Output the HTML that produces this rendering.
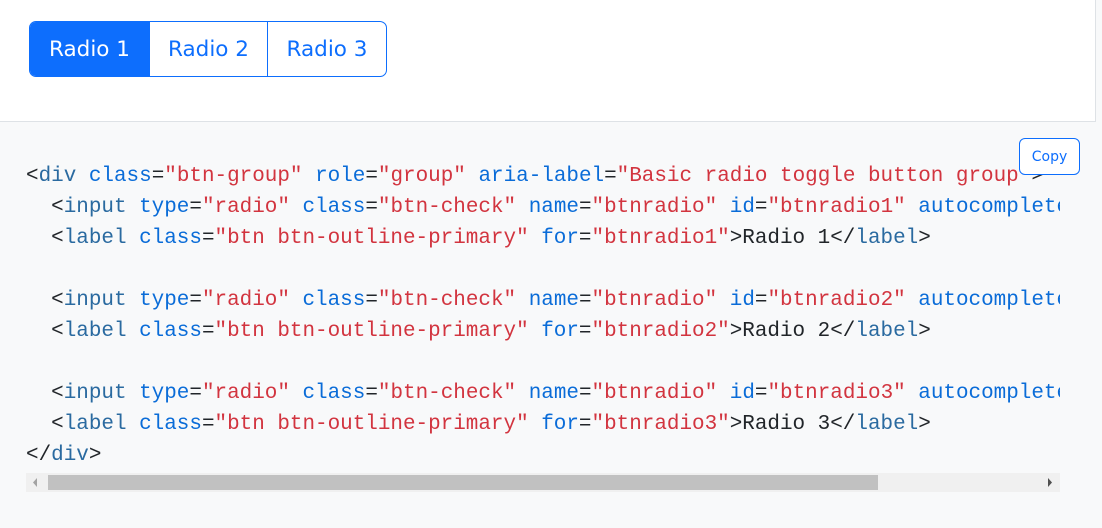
<!DOCTYPE html>
<html><head><meta charset="utf-8"><style>
body{margin:0;width:1102px;height:528px;background:#f8f9fa;font-family:"DejaVu Sans","Liberation Sans",sans-serif;position:relative;overflow:hidden}
.top{position:absolute;left:0;top:0;width:1095px;height:121px;background:#fff;border-right:1px solid #dee2e6;border-bottom:1px solid #dee2e6}
.grp{position:absolute;left:29px;top:21px;display:flex;height:56px;border:1px solid #0d6efd;border-radius:7px;overflow:hidden;box-sizing:border-box}
.grp div{display:flex;align-items:center;justify-content:center;font-size:21.5px;color:#0d6efd;box-sizing:border-box}
.grp .a{background:#0d6efd;color:#fff;width:119px}
.grp .b{width:118px;border-left:1px solid #0d6efd}
.grp .c{width:119px;border-left:1px solid #0d6efd}
.code{position:absolute;left:26px;top:161px;width:1034px;overflow:hidden;white-space:pre;font-family:"Liberation Mono",monospace;font-size:20.95px;line-height:31px;color:#212529}
.t{color:#2a6aa0}.n{color:#0a6cd8}.s{color:#d2343f}
.copy{position:absolute;left:1019px;top:138px;width:61px;height:37px;box-sizing:border-box;border:1px solid #0d6efd;border-radius:6px;background:#fff;color:#0d6efd;font-size:14px;display:flex;align-items:center;justify-content:center}
.sb{position:absolute;left:26px;top:473px;width:1034px;height:19px;background:#f0f0f0}
.th{position:absolute;left:22px;top:2px;width:830px;height:15px;background:#c1c1c1}
</style></head><body>
<div class="top"><div class="grp"><div class="a">Radio 1</div><div class="b">Radio 2</div><div class="c">Radio 3</div></div></div>
<div class="code">&lt;<span class="t">div</span> <span class="n">class</span>=<span class="s">"btn-group"</span> <span class="n">role</span>=<span class="s">"group"</span> <span class="n">aria-label</span>=<span class="s">"Basic radio toggle button group"</span>&gt;
  &lt;<span class="t">input</span> <span class="n">type</span>=<span class="s">"radio"</span> <span class="n">class</span>=<span class="s">"btn-check"</span> <span class="n">name</span>=<span class="s">"btnradio"</span> <span class="n">id</span>=<span class="s">"btnradio1"</span> <span class="n">autocomplete</span>=<span class="s">"off"</span> checked&gt;
  &lt;<span class="t">label</span> <span class="n">class</span>=<span class="s">"btn btn-outline-primary"</span> <span class="n">for</span>=<span class="s">"btnradio1"</span>&gt;Radio 1&lt;/<span class="t">label</span>&gt;

  &lt;<span class="t">input</span> <span class="n">type</span>=<span class="s">"radio"</span> <span class="n">class</span>=<span class="s">"btn-check"</span> <span class="n">name</span>=<span class="s">"btnradio"</span> <span class="n">id</span>=<span class="s">"btnradio2"</span> <span class="n">autocomplete</span>=<span class="s">"off"</span>&gt;
  &lt;<span class="t">label</span> <span class="n">class</span>=<span class="s">"btn btn-outline-primary"</span> <span class="n">for</span>=<span class="s">"btnradio2"</span>&gt;Radio 2&lt;/<span class="t">label</span>&gt;

  &lt;<span class="t">input</span> <span class="n">type</span>=<span class="s">"radio"</span> <span class="n">class</span>=<span class="s">"btn-check"</span> <span class="n">name</span>=<span class="s">"btnradio"</span> <span class="n">id</span>=<span class="s">"btnradio3"</span> <span class="n">autocomplete</span>=<span class="s">"off"</span>&gt;
  &lt;<span class="t">label</span> <span class="n">class</span>=<span class="s">"btn btn-outline-primary"</span> <span class="n">for</span>=<span class="s">"btnradio3"</span>&gt;Radio 3&lt;/<span class="t">label</span>&gt;
&lt;/<span class="t">div</span>&gt;</div>
<div class="copy">Copy</div>
<div class="sb"><div class="th"></div>
<svg style="position:absolute;left:6px;top:5px" width="6" height="9"><path d="M5 0L1 4.5L5 9Z" fill="#a3a3a3"/></svg>
<svg style="position:absolute;right:7px;top:5px" width="6" height="9"><path d="M1 0L5 4.5L1 9Z" fill="#505050"/></svg>
</div>
</body></html>
